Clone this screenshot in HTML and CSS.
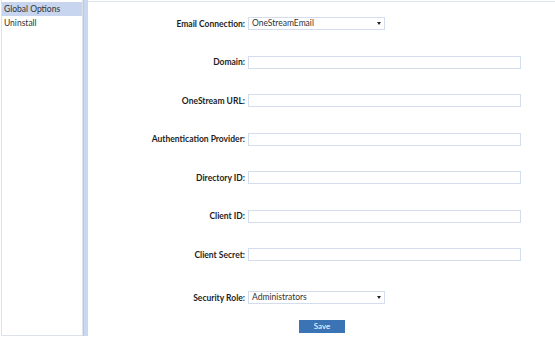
FILE: index.html
```html
<!DOCTYPE html>
<html>
<head>
    <title>Global Options</title>
    <link rel="stylesheet" href="styles.css">
</head>
<body>
    <div class="container">
        <div class="left-panel">
            <div class="nav-item active">Global Options</div>
            <div class="nav-item">Uninstall</div>
        </div>
        <div class="splitter"></div>
        <div class="main-panel">
            <div class="form">
                <div class="row">
                    <label>Email Connection:</label>
                    <div class="select">OneStreamEmail<span class="arrow"></span></div>
                </div>
                <div class="row">
                    <label>Domain:</label>
                    <input type="text">
                </div>
                <div class="row">
                    <label>OneStream URL:</label>
                    <input type="text">
                </div>
                <div class="row">
                    <label>Authentication Provider:</label>
                    <input type="text">
                </div>
                <div class="row">
                    <label>Directory ID:</label>
                    <input type="text">
                </div>
                <div class="row">
                    <label>Client ID:</label>
                    <input type="text">
                </div>
                <div class="row">
                    <label>Client Secret:</label>
                    <input type="text">
                </div>
                <div class="row role-row">
                    <label>Security Role:</label>
                    <div class="select">Administrators<span class="arrow"></span></div>
                </div>
                <div class="button-row">
                    <button>Save</button>
                </div>
            </div>
        </div>
    </div>
</body>
</html>
```

FILE: styles.css
```css
body {
    margin: 0;
    font-family: 'Lato', 'Open Sans', sans-serif;
    font-size: 8.5px;
    background: #fff;
    color: #222;
}
.container {
    display: flex;
    height: 336px;
}
.left-panel {
    width: 80px;
    margin-left: 1px;
    border: 1px solid #dde2ea;
    border-top: none;
    padding-top: 2px;
}
.nav-item {
    height: 14px;
    line-height: 14px;
    padding-left: 2px;
    color: #333;
}
.nav-item.active {
    background: #c7d5ee;
}
.splitter {
    width: 4px;
    background: #c9d7f0;
    border-left: 1px solid #b9c9e6;
}
.main-panel {
    flex: 1;
    margin-top: 1px;
    border-top: 1px solid #dfe5ef;
}
.form {
    display: flex;
    flex-direction: column;
    gap: 25.5px;
    padding-top: 15px;
}
.row {
    display: flex;
    align-items: center;
    height: 13px;
}
.row label {
    width: 157px;
    margin-right: 3px;
    text-align: right;
    font-weight: bold;
    color: #1e1e1e;
}
input[type="text"] {
    width: 273px;
    height: 13px;
    box-sizing: border-box;
    border: 1px solid #d3ddee;
    padding: 0 3px;
    margin: 0;
    outline: none;
}
.select {
    position: relative;
    width: 137px;
    height: 13px;
    box-sizing: border-box;
    border: 1px solid #d3ddee;
    padding: 0 3px;
    line-height: 11px;
    color: #333;
}
.arrow {
    position: absolute;
    right: 3px;
    top: 4px;
    border-left: 2px solid transparent;
    border-right: 2px solid transparent;
    border-top: 3px solid #222;
}
.role-row {
    margin-top: 4.5px;
}
.button-row {
    margin-top: -9.5px;
    padding-left: 211px;
}
button {
    width: 46px;
    height: 13px;
    padding: 0;
    border: none;
    background: #3b74b4;
    color: #fff;
    font-family: inherit;
    font-size: 8px;
    line-height: 13px;
}
```
